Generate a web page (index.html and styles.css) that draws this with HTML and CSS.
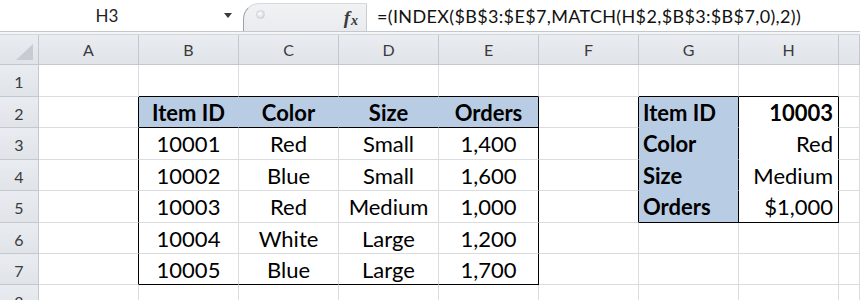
FILE: index.html
```html
<!DOCTYPE html>
<html>
<head>
<meta charset="utf-8">
<link rel="stylesheet" href="styles.css">
</head>
<body>
<div class="app">
  <div class="toolbar">
    <div class="namebox">H3</div>
    <div class="ddarrow"></div>
    <div class="fxzone">
      <span class="knob"></span>
      <span class="fx"><span class="fx-f">f</span><span class="fx-x">x</span></span>
    </div>
    <div class="formula">=(INDEX($B$3:$E$7,MATCH(H$2,$B$3:$B$7,0),2))</div>
  </div>
  <div class="sep"></div>
  <div class="sheet">
    <!-- column headers -->
    <div class="c h corner"><span class="tri"></span></div>
    <div class="c h">A</div><div class="c h">B</div><div class="c h">C</div><div class="c h">D</div>
    <div class="c h">E</div><div class="c h">F</div><div class="c h">G</div><div class="c h">H</div>
    <div class="c h"></div>

    <!-- row 1 -->
    <div class="c h rh">1</div>
    <div class="c"></div>
    <div class="c bb"></div><div class="c bb"></div><div class="c bb"></div><div class="c bb"></div>
    <div class="c"></div>
    <div class="c bb"></div><div class="c bb"></div>
    <div class="c"></div>

    <!-- row 2 -->
    <div class="c h rh">2</div>
    <div class="c br"></div>
    <div class="c hd bb b">Item ID</div>
    <div class="c hd bb b">Color</div>
    <div class="c hd bb b">Size</div>
    <div class="c hd bb br b">Orders</div>
    <div class="c br"></div>
    <div class="c lab br b">Item ID</div>
    <div class="c val br b">10003</div>
    <div class="c"></div>

    <!-- row 3 -->
    <div class="c h rh">3</div>
    <div class="c br"></div>
    <div class="c">10001</div><div class="c">Red</div><div class="c">Small</div><div class="c br">1,400</div>
    <div class="c br"></div>
    <div class="c lab br b">Color</div>
    <div class="c val br">Red</div>
    <div class="c"></div>

    <!-- row 4 -->
    <div class="c h rh">4</div>
    <div class="c br"></div>
    <div class="c">10002</div><div class="c">Blue</div><div class="c">Small</div><div class="c br">1,600</div>
    <div class="c br"></div>
    <div class="c lab br b">Size</div>
    <div class="c val br">Medium</div>
    <div class="c"></div>

    <!-- row 5 -->
    <div class="c h rh">5</div>
    <div class="c br"></div>
    <div class="c">10003</div><div class="c">Red</div><div class="c">Medium</div><div class="c br">1,000</div>
    <div class="c br"></div>
    <div class="c lab br bb b">Orders</div>
    <div class="c val br bb">$1,000</div>
    <div class="c"></div>

    <!-- row 6 -->
    <div class="c h rh">6</div>
    <div class="c br"></div>
    <div class="c">10004</div><div class="c">White</div><div class="c">Large</div><div class="c br">1,200</div>
    <div class="c"></div><div class="c"></div><div class="c"></div><div class="c"></div>

    <!-- row 7 -->
    <div class="c h rh">7</div>
    <div class="c br"></div>
    <div class="c bb">10005</div><div class="c bb">Blue</div><div class="c bb">Large</div><div class="c bb br">1,700</div>
    <div class="c"></div><div class="c"></div><div class="c"></div><div class="c"></div>

    <!-- row 8 -->
    <div class="c h rh r8">8</div>
    <div class="c"></div><div class="c"></div><div class="c"></div><div class="c"></div>
    <div class="c"></div><div class="c"></div><div class="c"></div><div class="c"></div>
    <div class="c"></div>
  </div>
</div>
</body>
</html>
```

FILE: styles.css
```css
html, body {
  margin: 0;
  padding: 0;
  background: #ffffff;
}

.app {
  width: 860px;
  height: 300px;
  overflow: hidden;
  font-family: "Lato", "Open Sans", sans-serif;
}

.toolbar {
  height: 31px;
  display: flex;
  align-items: stretch;
  background: #ffffff;
}

.namebox {
  width: 214px;
  display: flex;
  align-items: center;
  justify-content: center;
  font-size: 17px;
  color: #222222;
}

.ddarrow {
  width: 0;
  height: 0;
  margin: 13px 0 0 10px;
  border-left: 4.5px solid transparent;
  border-right: 4.5px solid transparent;
  border-top: 5px solid #3a3a3a;
}

.fxzone {
  margin: 3px 0 0 11px;
  width: 122px;
  border-left: 1px solid #9fa3a8;
  border-top: 1px solid #d6d9dd;
  border-right: 1px solid #c9cdd2;
  border-radius: 16px 0 0 0;
  background: linear-gradient(#f1f2f4, #e9ebee);
  display: flex;
  align-items: center;
}

.knob {
  width: 7px;
  height: 7px;
  border-radius: 50%;
  margin-left: 12px;
  background: radial-gradient(circle at 40% 40%, #ffffff, #c8ccd1);
  border: 1px solid #d0d3d7;
  margin-top: -6px;
}

.fx {
  margin-left: auto;
  margin-right: 8px;
  font-family: "Liberation Serif", "DejaVu Serif", serif;
  font-style: italic;
  font-weight: bold;
  color: #3a3a3a;
  display: flex;
  align-items: baseline;
}

.fx-f {
  font-size: 19px;
}

.fx-x {
  font-size: 14px;
  margin-left: 1px;
  position: relative;
  top: 1px;
}

.formula {
  padding-left: 10px;
  display: flex;
  align-items: center;
  font-size: 18px;
  letter-spacing: 0.35px;
  color: #111111;
  white-space: nowrap;
}

.sep {
  height: 2px;
  border-top: 1px solid #c3c6ca;
  border-bottom: 1px solid #d2d5d9;
  background: #f4f5f7;
}

.sheet {
  display: grid;
  grid-template-columns: 39px repeat(8, 100px) 1fr;
  grid-template-rows: 30px 32px 31px 32px 31px 32px 31px 31px 31px;
}

.c {
  box-sizing: border-box;
  border-right: 1px solid #dadcdf;
  border-bottom: 1px solid #dadcdf;
  display: flex;
  align-items: center;
  justify-content: center;
  font-size: 22px;
  color: #000000;
  white-space: nowrap;
}

.h {
  background: linear-gradient(#e9ecf0, #e0e4e9);
  border-right-color: #c3c8ce;
  border-bottom-color: #c3c8ce;
  color: #3b3b3b;
  font-size: 16px;
  font-weight: normal;
}

.rh {
  padding-top: 2px;
}

.r8 {
  align-items: flex-start;
  padding-top: 7px;
}

.corner {
  position: relative;
}

.tri {
  position: absolute;
  right: 5px;
  bottom: 4px;
  width: 0;
  height: 0;
  border-left: 17px solid transparent;
  border-bottom: 16px solid #c7ccd2;
}

.b {
  font-weight: bold;
}

.hd {
  background: #b8cce4;
  border-right-color: #b8cce4;
}

.lab {
  background: #b8cce4;
  border-bottom-color: #b8cce4;
  justify-content: flex-start;
  padding-left: 4px;
}

.val {
  background: #ffffff;
  border-bottom-color: #ffffff;
  justify-content: flex-end;
  padding-right: 5px;
}

.bb {
  border-bottom-color: #000000;
}

.br {
  border-right-color: #000000;
}
```
